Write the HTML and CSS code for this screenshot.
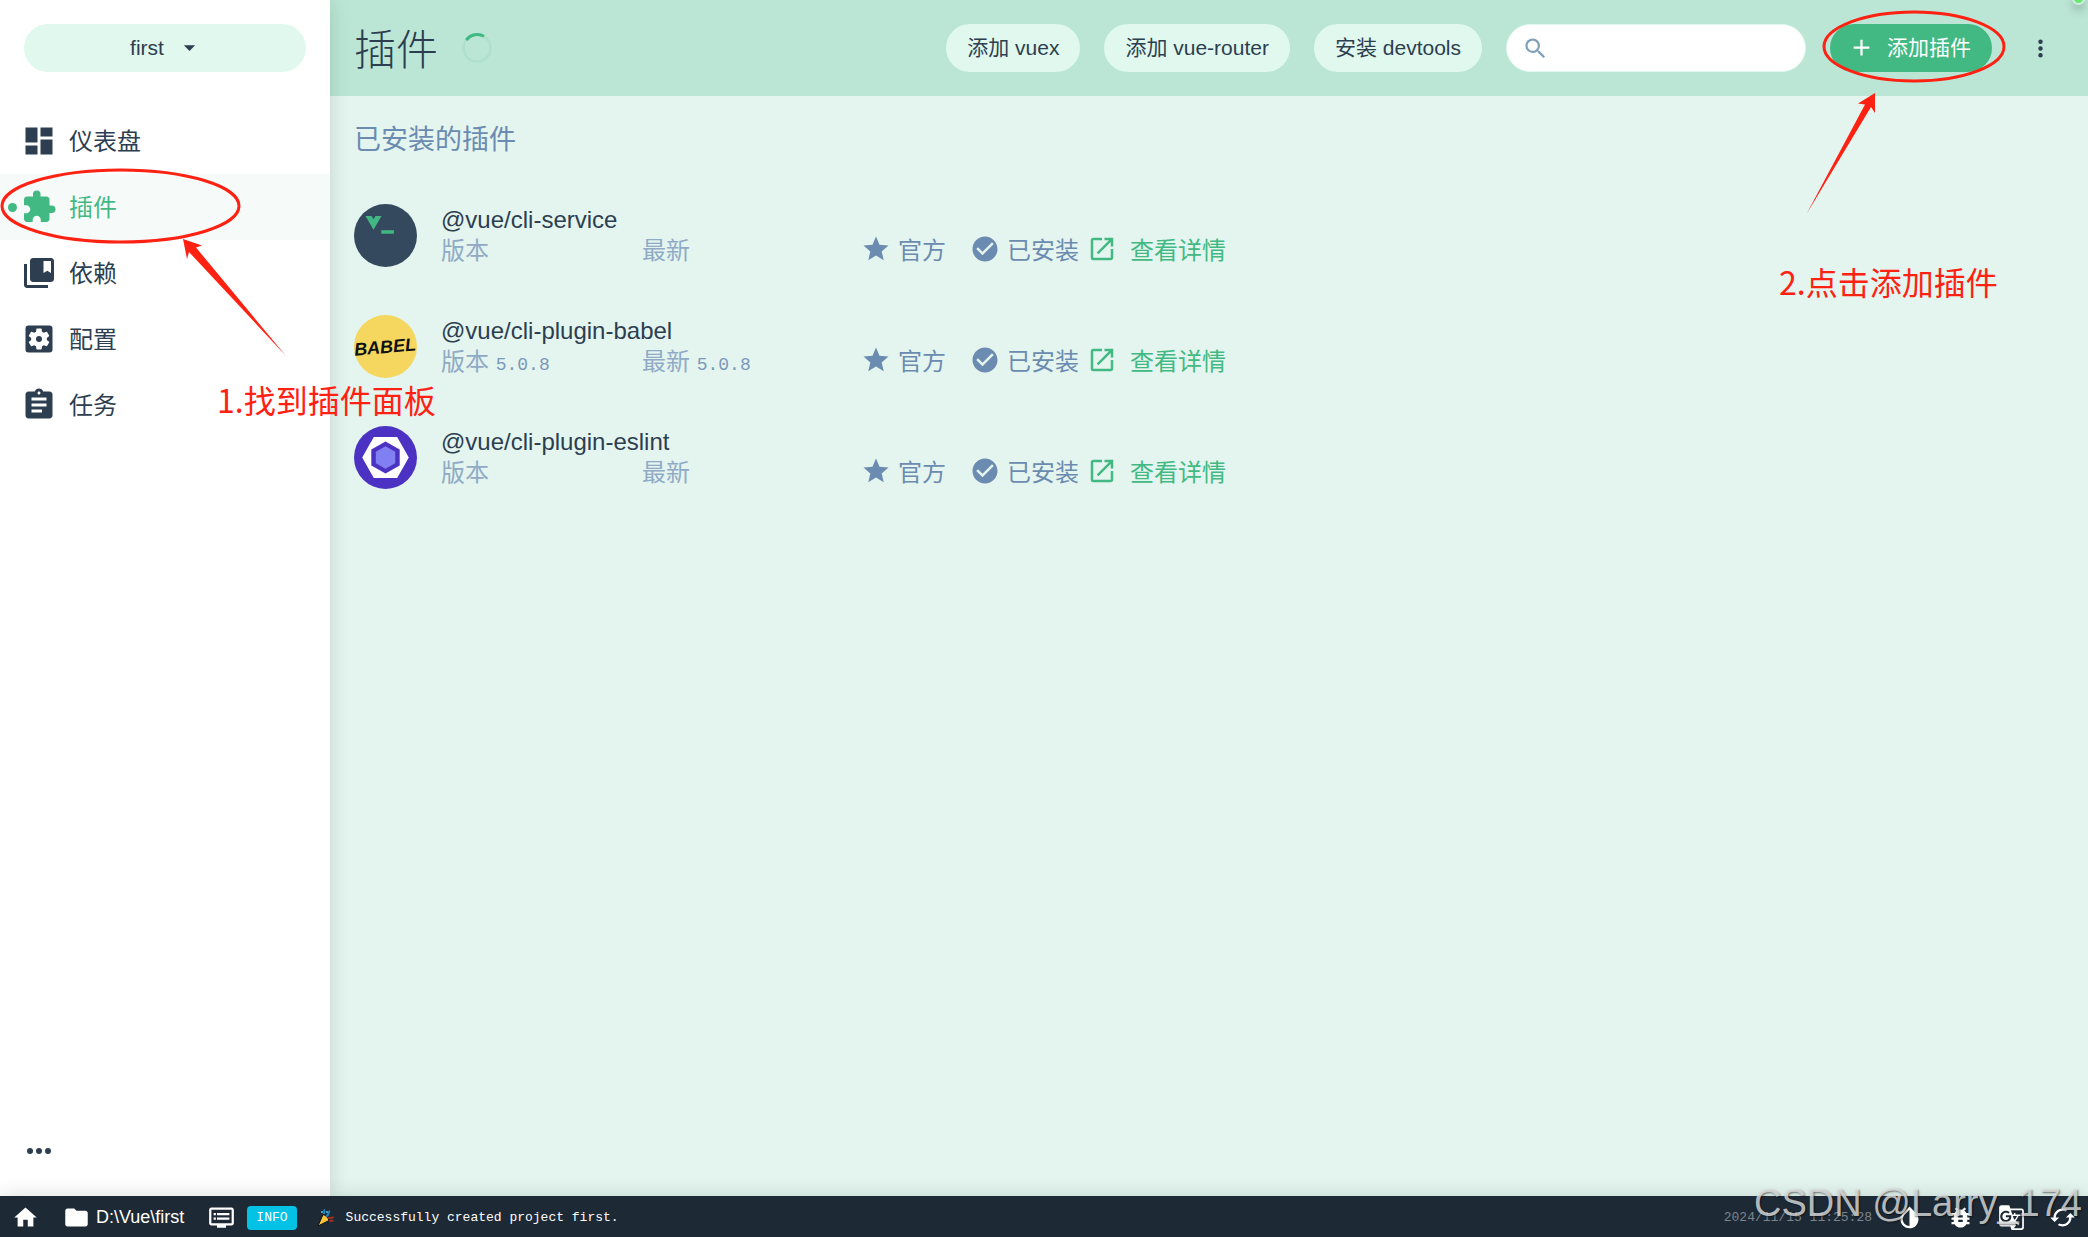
FILE: index.html
```html
<!DOCTYPE html>
<html lang="zh-CN">
<head>
<meta charset="utf-8">
<title>插件 - first</title>
<link rel="stylesheet" href="styles.css">
</head>
<body>
<svg class="sprite" aria-hidden="true">
  <symbol id="star" viewBox="0 0 24 24"><path d="M12 17.27 18.18 21l-1.64-7.03L22 9.24l-7.19-.61L12 2 9.19 8.63 2 9.24l5.46 4.73L5.82 21z"/></symbol>
  <symbol id="check" viewBox="0 0 24 24"><path d="M12 2C6.48 2 2 6.48 2 12s4.48 10 10 10 10-4.48 10-10S17.52 2 12 2zm-2 15-5-5 1.41-1.41L10 14.17l7.59-7.59L19 8l-9 9z"/></symbol>
  <symbol id="open" viewBox="0 0 24 24"><path d="M19 19H5V5h7V3H5a2 2 0 0 0-2 2v14a2 2 0 0 0 2 2h14c1.1 0 2-.9 2-2v-7h-2v7zM14 3v2h3.59l-9.83 9.83 1.41 1.41L19 6.41V10h2V3h-7z"/></symbol>
</svg>
<div class="app">
  <div class="body">
    <aside class="sidebar">
      <button class="project" type="button">first
        <svg class="icon-m" viewBox="0 0 24 24"><path d="m7 10 5 5 5-5z"/></svg>
      </button>
      <nav class="nav">
        <a class="nav-item" href="#dashboard"><svg class="icon-l" viewBox="0 0 24 24"><path d="M3 13h8V3H3v10zm0 8h8v-6H3v6zm10 0h8V11h-8v10zm0-18v6h8V3h-8z"/></svg>仪表盘</a>
        <a class="nav-item active" href="#plugins"><svg class="icon-l" viewBox="0 0 24 24"><path d="M20.5 11H19V7c0-1.1-.9-2-2-2h-4V3.500a2.500 2.500 0 0 0-5 0V5H4c-1.100 0-1.990.9-1.990 2v3.800H3.500c1.490 0 2.700 1.210 2.700 2.700s-1.210 2.700-2.700 2.700H2V20c0 1.100.9 2 2 2h3.800v-1.500c0-1.490 1.210-2.700 2.700-2.700s2.700 1.210 2.700 2.700V22H17c1.100 0 2-.9 2-2v-4h1.500a2.500 2.500 0 0 0 0-5z"/></svg>插件</a>
        <a class="nav-item" href="#dependencies"><svg class="icon-l" viewBox="0 0 24 24"><path d="M4 6H2v14c0 1.100.9 2 2 2h14v-2H4V6zm16-4H8c-1.100 0-2 .9-2 2v12c0 1.100.9 2 2 2h12c1.100 0 2-.9 2-2V4c0-1.100-.9-2-2-2zm0 10-2.500-1.500L15 12V4h5v8z"/></svg>依赖</a>
        <a class="nav-item" href="#configuration"><svg class="icon-l" viewBox="0 0 24 24"><path d="M12 10a2 2 0 1 0 0 4 2 2 0 0 0 0-4zm7-7H5a2 2 0 0 0-2 2v14a2 2 0 0 0 2 2h14a2 2 0 0 0 2-2V5a2 2 0 0 0-2-2zm-1.750 9c0 .23-.02.46-.05.68l1.480 1.160c.13.11.17.3.08.45l-1.400 2.420c-.09.15-.27.21-.43.15l-1.740-.7c-.36.28-.76.51-1.180.69l-.26 1.850c-.03.17-.18.3-.35.3h-2.800c-.17 0-.32-.13-.35-.29l-.26-1.850c-.43-.18-.82-.41-1.180-.69l-1.740.7c-.16.06-.34 0-.43-.15l-1.400-2.420c-.09-.15-.05-.34.08-.45l1.480-1.160a5.700 5.700 0 0 1 0-1.370L5.320 10.160c-.13-.11-.17-.3-.08-.45l1.400-2.420c.09-.15.27-.21.43-.15l1.740.7c.36-.28.76-.51 1.180-.69l.26-1.850c.03-.17.18-.3.35-.3h2.800c.17 0 .32.13.35.29l.26 1.850c.43.18.82.41 1.180.69l1.740-.7c.16-.06.34 0 .43.15l1.400 2.420c.09.15.05.34-.08.45l-1.480 1.160c.03.23.05.46.05.69z"/></svg>配置</a>
        <a class="nav-item" href="#tasks"><svg class="icon-l" viewBox="0 0 24 24"><path d="M19 3h-4.180C14.400 1.840 13.300 1 12 1s-2.400.84-2.820 2H5c-1.100 0-2 .9-2 2v14c0 1.100.9 2 2 2h14c1.100 0 2-.9 2-2V5c0-1.100-.9-2-2-2zm-7 0c.55 0 1 .45 1 1s-.45 1-1 1-1-.45-1-1 .45-1 1-1zm2 14H7v-2h7v2zm3-4H7v-2h10v2zm0-4H7V7h10v2z"/></svg>任务</a>
      </nav>
      <button class="nav-item more" type="button" aria-label="更多"><svg class="icon-l" viewBox="0 0 24 24"><path d="M6 10a2 2 0 1 0 0 4 2 2 0 0 0 0-4zm12 0a2 2 0 1 0 0 4 2 2 0 0 0 0-4zm-6 0a2 2 0 1 0 0 4 2 2 0 0 0 0-4z"/></svg></button>
    </aside>
    <main class="main">
      <header class="topbar">
        <h1>插件</h1>
        <svg class="spinner" viewBox="0 0 30 30"><circle cx="15" cy="15" r="13.500" fill="none" stroke="#aee0cc" stroke-width="2.500"/><path d="M4.300 7.200A13.500 13.500 0 0 1 22 3.300" fill="none" stroke="#42b983" stroke-width="3"/></svg>
        <div class="actions">
          <button class="btn" type="button">添加 vuex</button>
          <button class="btn" type="button">添加 vue-router</button>
          <button class="btn" type="button">安装 devtools</button>
          <label class="search" aria-label="搜索">
            <svg class="icon-m" viewBox="0 0 24 24"><path d="M15.500 14h-.79l-.28-.27A6.471 6.471 0 0 0 16 9.500 6.500 6.500 0 1 0 9.500 16c1.610 0 3.090-.59 4.230-1.570l.27.28v.79l5 4.990L20.490 19l-4.990-5zm-6 0C7.010 14 5 11.990 5 9.500S7.010 5 9.500 5 14 7.010 14 9.500 11.990 14 9.500 14z"/></svg>
            <input type="text">
          </label>
          <button class="btn primary" type="button"><svg class="icon-m" viewBox="0 0 24 24"><path d="M19 13h-6v6h-2v-6H5v-2h6V5h2v6h6v2z"/></svg>添加插件</button>
          <button class="menu" type="button" aria-label="菜单"><svg class="icon-m" viewBox="0 0 24 24"><path d="M12 8a2 2 0 1 0 0-4 2 2 0 0 0 0 4zm0 2a2 2 0 1 0 0 4 2 2 0 0 0 0-4zm0 6a2 2 0 1 0 0 4 2 2 0 0 0 0-4z"/></svg></button>
        </div>
      </header>
      <section>
        <h2>已安装的插件</h2>
        <ul class="plugins">
          <li class="plugin">
            <svg class="avatar" viewBox="0 0 63 63"><circle cx="31.500" cy="31.500" r="31.500" fill="#35495e"/><path d="M11.500 12h6l2 3.300 2-3.300h6L19.500 25.700z" fill="#41b883"/><path d="M27.300 26.200h12.600v3.500H27.300z" fill="#41b883"/></svg>
            <div class="info">
              <div class="name">@vue/cli-service</div>
              <div class="meta">
                <span class="version">版本</span><span class="latest">最新</span>
                <span class="tag official"><svg class="icon-i"><use href="#star"/></svg>官方</span>
                <span class="tag"><svg class="icon-i"><use href="#check"/></svg>已安装</span>
                <a class="details" href="#cli-service"><svg class="icon-i"><use href="#open"/></svg>查看详情</a>
              </div>
            </div>
          </li>
          <li class="plugin">
            <svg class="avatar" viewBox="0 0 63 63"><circle cx="31.500" cy="31.500" r="31.500" fill="#f5d75f"/><text class="babel" x="31" y="38" text-anchor="middle" transform="rotate(-5 31 32)">BABEL</text></svg>
            <div class="info">
              <div class="name">@vue/cli-plugin-babel</div>
              <div class="meta">
                <span class="version">版本 <b>5.0.8</b></span><span class="latest">最新 <b>5.0.8</b></span>
                <span class="tag official"><svg class="icon-i"><use href="#star"/></svg>官方</span>
                <span class="tag"><svg class="icon-i"><use href="#check"/></svg>已安装</span>
                <a class="details" href="#babel"><svg class="icon-i"><use href="#open"/></svg>查看详情</a>
              </div>
            </div>
          </li>
          <li class="plugin">
            <svg class="avatar" viewBox="0 0 63 63"><circle cx="31.500" cy="31.500" r="31.500" fill="#4b32c3"/><path d="M19.800 11h23.400l11.600 20.500L43.200 52H19.800L8.200 31.500z" fill="#fff"/><path d="m31.500 15.500 14.200 8v16l-14.200 8-14.200-8v-16z" fill="#4b32c3"/><path d="m31.500 20.300 9.700 5.500v11.400l-9.700 5.500-9.700-5.500V25.800z" fill="#8080f2"/></svg>
            <div class="info">
              <div class="name">@vue/cli-plugin-eslint</div>
              <div class="meta">
                <span class="version">版本</span><span class="latest">最新</span>
                <span class="tag official"><svg class="icon-i"><use href="#star"/></svg>官方</span>
                <span class="tag"><svg class="icon-i"><use href="#check"/></svg>已安装</span>
                <a class="details" href="#eslint"><svg class="icon-i"><use href="#open"/></svg>查看详情</a>
              </div>
            </div>
          </li>
        </ul>
      </section>
    </main>
  </div>
  <footer class="status">
    <button class="cell" type="button" aria-label="主页"><svg class="icon-m" viewBox="0 0 24 24"><path d="M10 20v-6h4v6h5v-8h3L12 3 2 12h3v8z"/></svg></button>
    <button class="cell path" type="button"><svg class="icon-m" viewBox="0 0 24 24"><path d="M10 4H4c-1.100 0-1.990.9-1.990 2L2 18c0 1.100.9 2 2 2h16c1.100 0 2-.9 2-2V8c0-1.100-.9-2-2-2h-8l-2-2z"/></svg>D:\Vue\first</button>
    <button class="cell log" type="button"><svg class="icon-m" viewBox="0 0 24 24"><path d="M21 3H3c-1.100 0-2 .9-2 2v12c0 1.100.9 2 2 2h5v2h8v-2h5c1.100 0 1.990-.9 1.990-2L23 5c0-1.100-.9-2-2-2zm0 14H3V5h18v12zm-2-9H8v2h11V8zm0 4H8v2h11v-2zM7 8H5v2h2V8zm0 4H5v2h2v-2z"/></svg>
      <span class="badge">INFO</span>
      <svg class="party" viewBox="0 0 18 18"><path d="m1 17 5-11.500c2.500.5 5.500 3.500 6 6z" fill="#fcc33c" stroke="#111" stroke-width="1"/><path d="M7 5c0-2 1-3 0-4.500M9 7c3 0 2-4 4-5" fill="none" stroke="#2583b8" stroke-width="2"/><path d="M11 9.500c1-1.500 3 .5 5.500-1.500M12.500 12l4-.5" fill="none" stroke="#a73120" stroke-width="2"/><path d="M4 2h2v2H4zM9 2h2v2H9z" fill="#3aa0c8"/></svg>
      <span>Successfully created project first.</span></button>
    <time>2024/11/15 11:25:28</time>
    <button class="cell tool" type="button" aria-label="主题"><svg class="icon-m" viewBox="0 0 24 24"><path d="M17.660 7.930 12 2.270 6.340 7.930c-3.120 3.120-3.120 8.190 0 11.310A7.980 7.980 0 0 0 12 21.580c2.050 0 4.100-.78 5.660-2.340 3.120-3.120 3.120-8.190 0-11.310zM12 19.590c-1.600 0-3.110-.62-4.240-1.760C6.620 16.690 6 15.190 6 13.590s.62-3.110 1.760-4.240L12 5.100v14.490z"/></svg></button>
    <button class="cell tool" type="button" aria-label="报告问题"><svg class="icon-m" viewBox="0 0 24 24"><path d="M20 8h-2.810a5.985 5.985 0 0 0-1.820-1.960L17 4.410 15.590 3l-2.170 2.170a6.002 6.002 0 0 0-2.830 0L8.410 3 7 4.410l1.620 1.630C7.880 6.550 7.260 7.220 6.810 8H4v2h2.090c-.05.33-.09.66-.09 1v1H4v2h2v1c0 .34.04.67.09 1H4v2h2.810a6 6 0 0 0 10.380 0H20v-2h-2.090c.05-.33.09-.66.09-1v-1h2v-2h-2v-1c0-.34-.04-.67-.09-1H20V8zm-6 8h-4v-2h4v2zm0-4h-4v-2h4v2z"/></svg></button>
    <button class="cell tool" type="button" aria-label="翻译"><svg class="icon-m" viewBox="0 0 24 24"><path d="M21 4H11l-1-3H3c-1.100 0-2 .9-2 2v15c0 1.100.9 2 2 2h8l1 3h9c1.100 0 2-.9 2-2V6c0-1.100-.9-2-2-2zM7 16c-2.760 0-5-2.240-5-5s2.240-5 5-5c1.350 0 2.480.5 3.350 1.300L9.030 8.570c-.38-.36-1.040-.78-2.030-.78-1.740 0-3.150 1.440-3.150 3.210S5.260 14.210 7 14.210c2.010 0 2.840-1.440 2.920-2.410H7v-1.710h4.680c.07.31.12.61.12 1.020C11.800 13.970 9.890 16 7 16zm6.170-5.420h3.700c-.43 1.250-1.110 2.430-2.050 3.470-.31-.35-.6-.72-.86-1.100l-.79-2.370zm8.330 9.920c0 .55-.45 1-1 1H14l2-2.500-1.040-3.100 3.100 3.100.92-.92-3.300-3.250.02-.02c1.130-1.250 1.930-2.690 2.400-4.220H20v-1.300h-4.530V8h-1.290v1.290h-1.440L11.460 5.500h9.040c.55 0 1 .45 1 1v14z"/></svg></button>
    <button class="cell tool" type="button" aria-label="刷新"><svg class="icon-m" viewBox="0 0 24 24"><path d="m19 8-4 4h3a6 6 0 0 1-6 6c-1.010 0-1.970-.25-2.800-.7l-1.460 1.460A7.930 7.930 0 0 0 12 20c4.420 0 8-3.580 8-8h3l-4-4zM6 12a6 6 0 0 1 6-6c1.010 0 1.970.25 2.800.7l1.460-1.460A7.930 7.930 0 0 0 12 4c-4.420 0-8 3.580-8 8H1l4 4 4-4H6z"/></svg></button>
  </footer>
</div>

<div class="note note-left">
  <svg width="300" height="200" viewBox="0 0 300 200"><ellipse cx="120.500" cy="46" rx="118.500" ry="36" fill="none" stroke="#ff2112" stroke-width="3"/><path d="m183 79 19 6.500-6 2L286 196 189 92l-2 7z"/></svg>
  <p>1.找到插件面板</p>
</div>
<div class="note note-right">
  <svg width="288" height="220" viewBox="0 0 288 220"><ellipse cx="114" cy="46.500" rx="90" ry="34.500" fill="none" stroke="#ff2112" stroke-width="3"/><path d="m75 93-17 10.500 7 1L6.500 214 71 107l4 6z"/></svg>
  <p>2.点击添加插件</p>
</div>
<span class="presence"></span>
<div class="watermark">CSDN @Larry_174</div>
</body>
</html>
```
FILE: styles.css
```css
* { box-sizing: border-box; }
body {
  position: relative;
  margin: 0;
  overflow: hidden;
  color: #2c3e50;
  font: 24px/31px "Liberation Sans", "Noto Sans CJK SC", sans-serif;
}
h1, h2, ul, p { margin: 0; padding: 0; }
button {
  border: 0;
  padding: 0;
  background: none;
  color: inherit;
  font: inherit;
  cursor: pointer;
}
a { color: inherit; text-decoration: none; }
svg { flex: none; fill: currentColor; }
.sprite { position: absolute; width: 0; height: 0; }
.icon-m { width: 27px; height: 27px; }
.icon-i { width: 30px; height: 30px; }
.icon-l { width: 36px; height: 36px; }

.app { display: flex; flex-direction: column; height: 100vh; }
.body { display: flex; flex: 1; min-height: 0; }

.sidebar {
  z-index: 1;
  display: flex;
  flex: none;
  flex-direction: column;
  width: 330px;
  padding: 24px 0 12px;
  background: #fff;
  box-shadow: 0 0 20px rgba(0, 0, 0, .14);
}
.project {
  display: flex;
  align-items: center;
  justify-content: center;
  gap: 12px;
  height: 48px;
  margin: 0 24px 36px;
  padding: 0 0 2px 3px;
  border-radius: 24px;
  background: #e0f8ed;
  font-size: 21px;
}
.nav-item {
  position: relative;
  display: flex;
  align-items: center;
  gap: 12px;
  height: 66px;
  padding-left: 21px;
}
.nav-item.active { background: #f6fbf9; color: #42b983; }
.nav-item.active::before {
  content: "";
  position: absolute;
  left: 8px;
  width: 9px;
  height: 9px;
  border-radius: 50%;
  background: #42b983;
}
.more { margin-top: auto; }

.main { flex: 1; min-width: 0; background: #e4f5ef; }
.topbar {
  display: flex;
  align-items: center;
  height: 96px;
  padding: 0 24px;
  background: #bbe6d6;
}
h1 { padding-top: 6px; font-size: 42px; font-weight: 300; line-height: 60px; }
.spinner { width: 30px; height: 30px; margin-left: 24px; }
.actions { display: flex; align-items: center; gap: 24px; margin-left: auto; }
.btn {
  display: flex;
  align-items: center;
  gap: 12px;
  height: 48px;
  padding: 0 21px 2px;
  border-radius: 24px;
  background: #e0f8ed;
  font-size: 21px;
  white-space: nowrap;
}
.primary { padding-left: 18px; background: #42b983; color: #fff; }
.search {
  display: flex;
  align-items: center;
  width: 300px;
  height: 48px;
  padding: 0 15px;
  border: 1px solid #e0f8ed;
  border-radius: 24px;
  background: #fff;
  color: #80a0b8;
}
.search input {
  flex: 1;
  min-width: 0;
  border: 0;
  outline: 0;
  background: none;
  font: inherit;
}
.menu { display: grid; place-items: center; width: 48px; height: 48px; }

h2 {
  padding: 24px 24px 20px;
  color: #6b8bb0;
  font-size: 27px;
  font-weight: 400;
  line-height: 40px;
}
.plugins { list-style: none; }
.plugin { display: flex; gap: 24px; padding: 24px; }
.avatar { width: 63px; height: 63px; }
.babel { fill: #111; font: italic bold 18px "Liberation Sans", sans-serif; }
.info { flex: 1; }
.meta { display: flex; color: #6b8bb0; }
.version, .latest { color: #90aac5; }
.version { width: 201px; }
.latest { width: 219px; }
.version b, .latest b {
  color: #7b98bb;
  font: 18px "Liberation Mono", monospace;
}
.tag, .details { display: flex; align-items: center; gap: 7px; }
.tag { margin-right: 8px; }
.official { margin-right: 24px; }
.details { gap: 13px; color: #42b983; }
.meta .icon-i { margin: -2px 0 2px; }

.status {
  z-index: 2;
  display: flex;
  align-items: center;
  height: 41px;
  padding-top: 2px;
  background: #1d2935;
  color: #fff;
  box-shadow: 0 0 20px rgba(0, 0, 0, .14);
  font-size: 18px;
}
.cell { display: flex; align-items: center; height: 39px; padding: 0 12px; }
.path { gap: 6px; }
.log { gap: 12px; font: 13px "Liberation Mono", monospace; }
.badge {
  padding: 0 9px;
  border-radius: 4px;
  background: #03c2e6;
  line-height: 24px;
}
.party { width: 18px; height: 18px; margin: 0 -1px 0 8px; }
time {
  margin: 0 12px 0 auto;
  color: #7c858d;
  font: 13px "Liberation Mono", monospace;
}
.tool { justify-content: center; width: 51px; }

/* Tutorial marks drawn over the page */
.note {
  position: absolute;
  z-index: 3;
  pointer-events: none;
  color: #ff2112;
  font-size: 32px;
  line-height: 48px;
}
.note svg { display: block; }
.note p { font-family: "Noto Sans CJK SC", sans-serif; white-space: nowrap; }
.note-left { top: 160px; left: 0; }
.note-left p { margin: 15px 0 0 217px; }
.note-right { top: 0; right: 0; }
.note-right p { margin: 37px 0 0 -21px; }
.presence {
  position: absolute;
  z-index: 3;
  top: -8px;
  right: 3px;
  width: 13px;
  height: 13px;
  border: 2px solid #cdeee0;
  border-radius: 50%;
  background: #6ce86c;
  box-shadow: 0 6px 10px rgba(0, 0, 0, .2);
}
.watermark {
  position: absolute;
  z-index: 3;
  right: 6px;
  bottom: 11px;
  color: rgba(225, 228, 228, .8);
  font-size: 38px;
  line-height: 46px;
  text-shadow: 1px 1px 2px rgba(0, 0, 0, .5);
  pointer-events: none;
}
```
